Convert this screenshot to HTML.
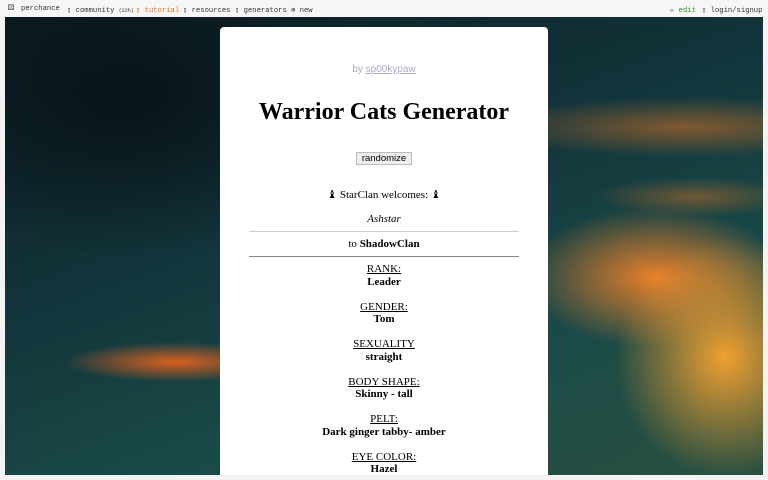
<!DOCTYPE html>
<html><head><meta charset="utf-8"><style>
*{margin:0;padding:0;box-sizing:border-box}
html,body{width:768px;height:480px;overflow:hidden;background:#f3f3f3}
#top{position:absolute;left:0;top:0;width:768px;height:17px;font:7.2px "Liberation Mono",monospace;color:#333;background:#f6f6f6}
#top span{position:absolute;top:5px;white-space:nowrap}
#bg{position:absolute;left:5px;top:17px;width:758px;height:458px;overflow:hidden;
background:
radial-gradient(ellipse 110px 120px at 720px 340px,#f0a030 0%,rgba(240,160,48,0) 100%),
radial-gradient(ellipse 130px 70px at 650px 260px,#e8802a 0%,rgba(230,120,40,0) 100%),
radial-gradient(ellipse 110px 20px at 170px 345px,#d86020 0%,rgba(200,90,30,0) 100%),
radial-gradient(ellipse 200px 30px at 680px 110px,rgba(200,110,40,.6) 0%,rgba(200,110,40,0) 100%),
radial-gradient(ellipse 100px 20px at 690px 180px,rgba(200,110,40,.5) 0%,rgba(200,110,40,0) 100%),
radial-gradient(ellipse 260px 160px at 120px 80px,#081418 0%,rgba(8,20,24,0) 100%),
linear-gradient(160deg,#0c1c22 0%,#12343a 40%,#1a4a48 70%,#2a5040 100%);}
#card{position:absolute;left:220px;top:27px;width:328px;height:448px;background:#fff;border-radius:4px 4px 0 0;text-align:center;font-family:"Liberation Serif",serif;color:#000;overflow:hidden}
</style></head><body>
<div id="top">
<span style="left:8px;font-size:10px;top:2px">⚄</span>
<span style="left:21px">perchance</span>
<span style="left:67px">▯ community <small style="font-size:5px">(22h)</small></span>
<span style="left:136px;color:#e07020">▯ tutorial</span>
<span style="left:183px">▯ resources</span>
<span style="left:235px">▯ generators</span>
<span style="left:291px">⊕ new</span>
<span style="left:670px;color:#2a8a2a">✏ edit</span>
<span style="left:702px">▯ login/signup</span>
</div>
<div id="bg"></div>
<div id="card">
<div style="position:absolute;top:37px;width:100%;font:10px 'Liberation Sans',sans-serif;color:#aab">by <u style="color:#aac">sp00kypaw</u></div>
<div style="position:absolute;top:72px;width:100%;font-weight:bold;font-size:24px">Warrior Cats Generator</div>
<div style="position:absolute;top:125px;left:136px;width:56px;height:13px;border:1px solid #bbb;background:#eee;font:9.5px 'Liberation Sans',sans-serif;line-height:11px">randomize</div>
<div style="position:absolute;top:161px;width:100%;font-size:11px">♝ StarClan welcomes: ♝</div>
<div style="position:absolute;top:186px;width:100%;font-size:11px;font-style:italic">Ashstar</div>
<div style="position:absolute;top:204px;left:29px;width:270px;border-top:1px solid #ccc"></div>
<div style="position:absolute;top:211px;width:100%;font-size:11px">to <b>ShadowClan</b></div>
<div style="position:absolute;top:229px;left:29px;width:270px;border-top:1px solid #888"></div>
<div style="position:absolute;top:236px;width:100%;font-size:11px;line-height:12.5px">
<u>RANK:</u><br><b>Leader</b><br><br>
<u>GENDER:</u><br><b>Tom</b><br><br>
<u>SEXUALITY</u><br><b>straight</b><br><br>
<u>BODY SHAPE:</u><br><b>Skinny - tall</b><br><br>
<u>PELT:</u><br><b>Dark ginger tabby- amber</b><br><br>
<u>EYE COLOR:</u><br><b>Hazel</b>
</div>
</div>
</body></html>
